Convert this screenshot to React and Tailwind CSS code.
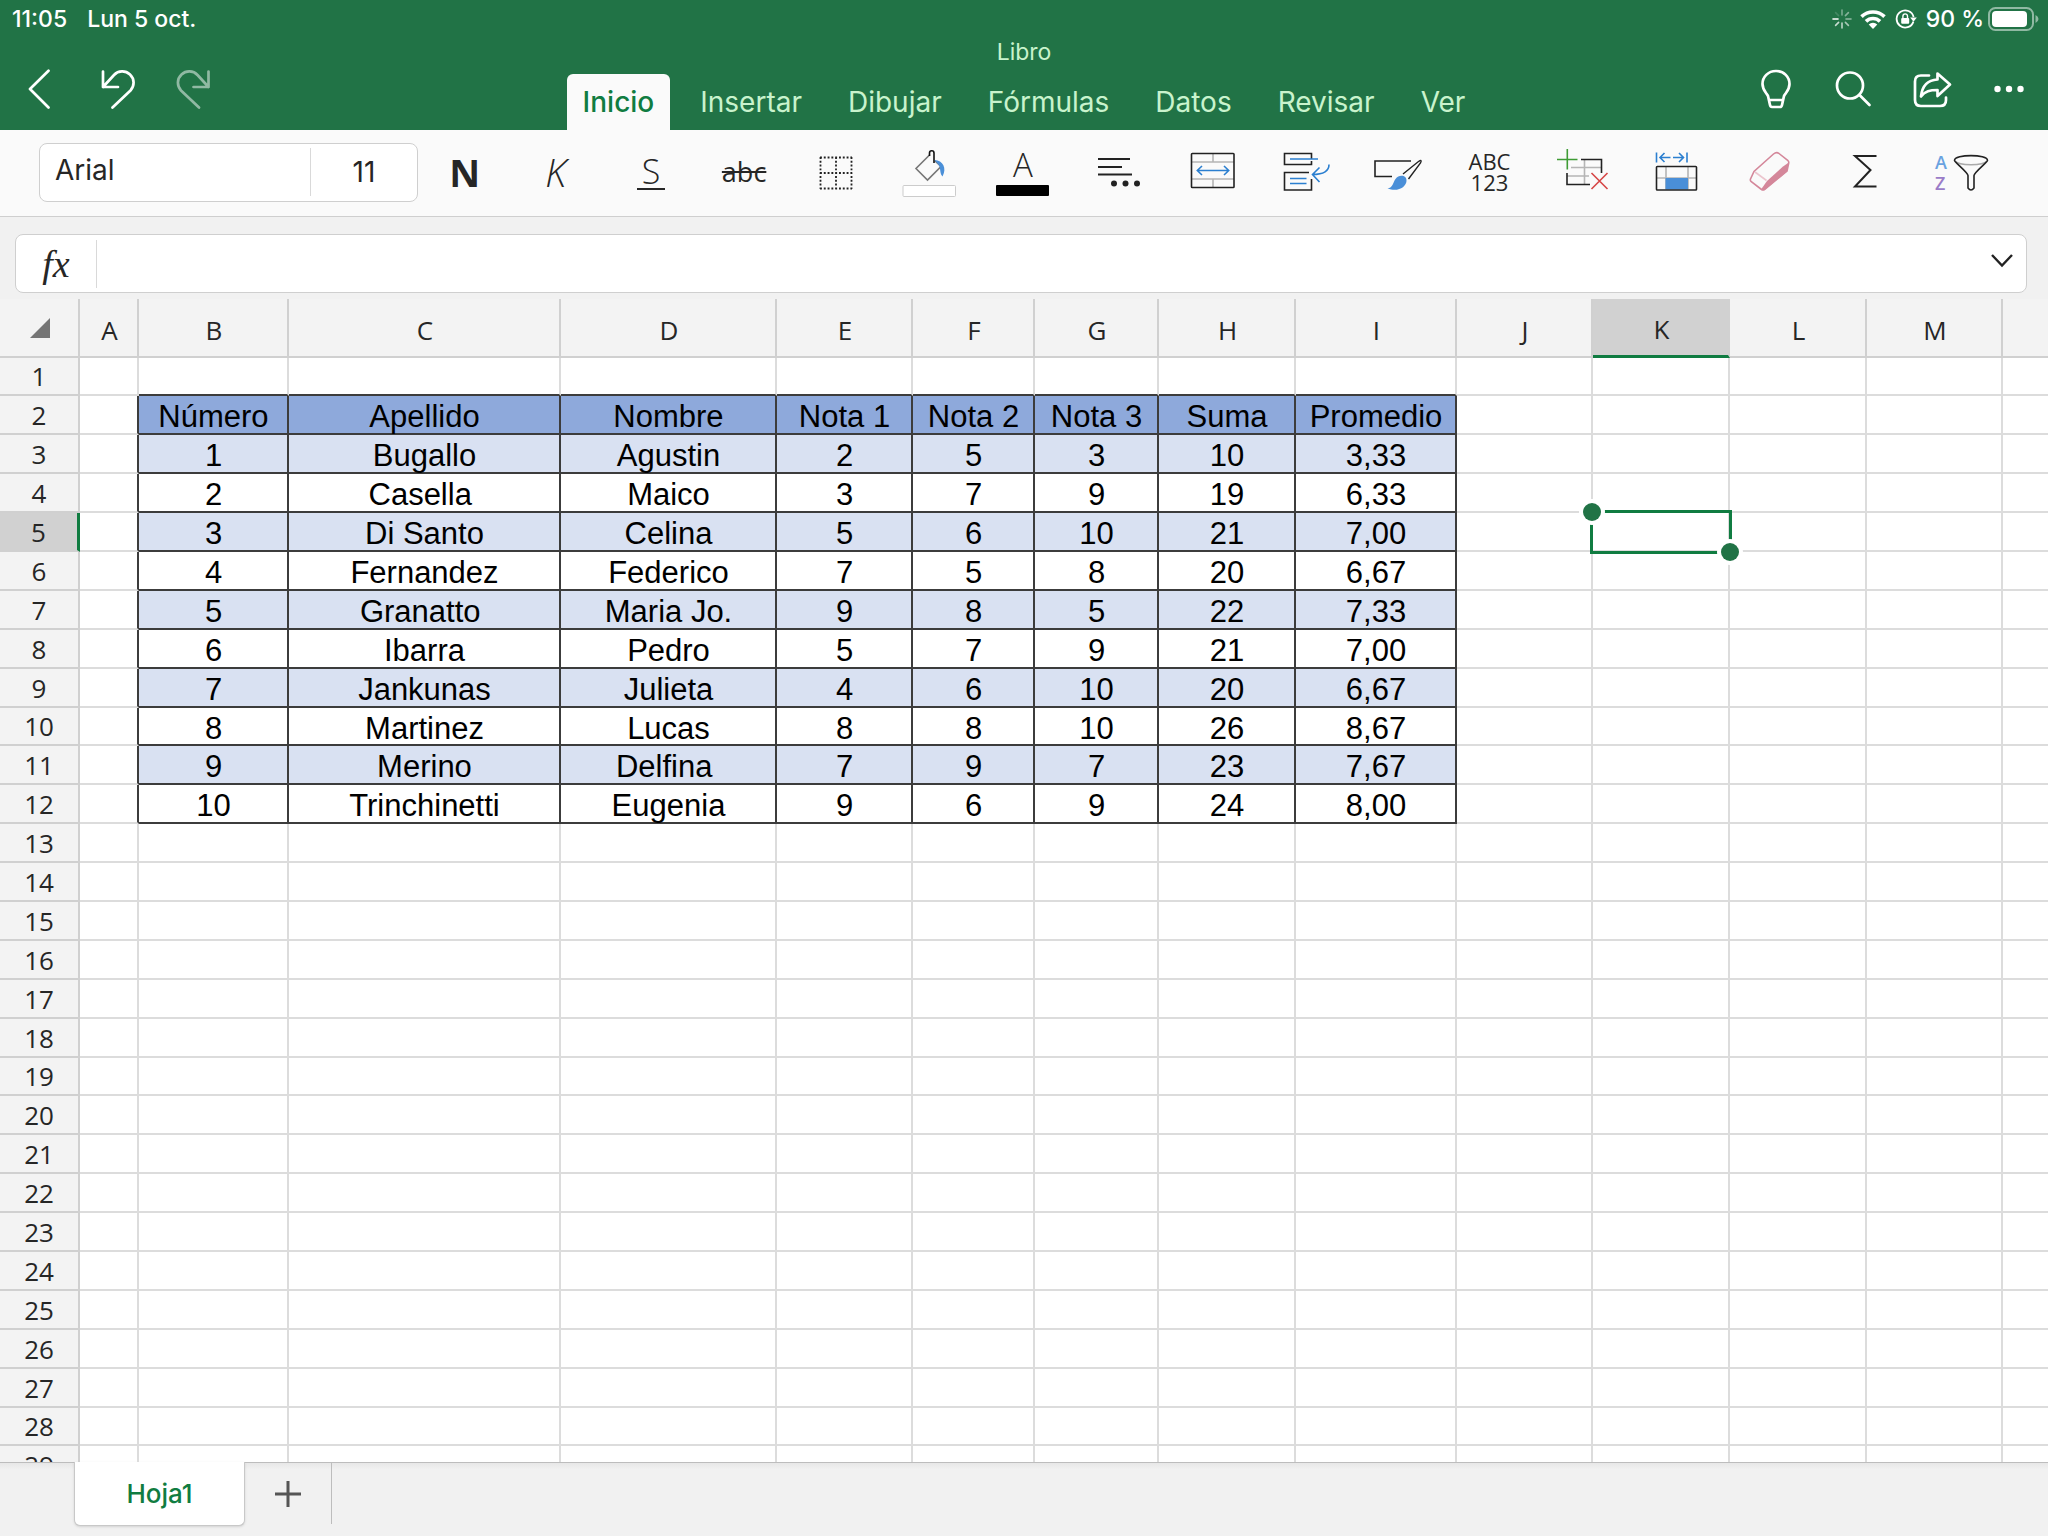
import { clsx } from 'clsx'

const tabs = ['Inicio', 'Insertar', 'Dibujar', 'Fórmulas', 'Datos', 'Revisar', 'Ver']

const columns = [
  { id: 'A', width: 'w-[59px]' },
  { id: 'B', width: 'w-[150px]' },
  { id: 'C', width: 'w-[272px]' },
  { id: 'D', width: 'w-[216px]' },
  { id: 'E', width: 'w-[136px]' },
  { id: 'F', width: 'w-[122px]' },
  { id: 'G', width: 'w-[124px]' },
  { id: 'H', width: 'w-[137px]' },
  { id: 'I', width: 'w-[161px]' },
  { id: 'J', width: 'w-[136px]' },
  { id: 'K', width: 'w-[137px]' },
  { id: 'L', width: 'w-[137px]' },
  { id: 'M', width: 'w-[136px]' },
  { id: '', width: '' },
]

// sheet data, starts at B2 (some names were typed with a trailing space)
const data = [
  ['Número', 'Apellido', 'Nombre', 'Nota 1', 'Nota 2', 'Nota 3', 'Suma', 'Promedio'],
  ['1', 'Bugallo', 'Agustin', '2', '5', '3', '10', '3,33'],
  ['2', 'Casella ', 'Maico', '3', '7', '9', '19', '6,33'],
  ['3', 'Di Santo', 'Celina', '5', '6', '10', '21', '7,00'],
  ['4', 'Fernandez', 'Federico', '7', '5', '8', '20', '6,67'],
  ['5', 'Granatto ', 'Maria Jo.', '9', '8', '5', '22', '7,33'],
  ['6', 'Ibarra', 'Pedro', '5', '7', '9', '21', '7,00'],
  ['7', 'Jankunas', 'Julieta', '4', '6', '10', '20', '6,67'],
  ['8', 'Martinez', 'Lucas', '8', '8', '10', '26', '8,67'],
  ['9', 'Merino', 'Delfina ', '7', '9', '7', '23', '7,67'],
  ['10', 'Trinchinetti', 'Eugenia', '9', '6', '9', '24', '8,00'],
]

const rows = Array.from({ length: 29 }, (_, i) => i + 1)
const selected = { col: 'K', row: 5 }

function Nav({ label, children, className }) {
  return (
    <button aria-label={label} className={clsx('size-10 text-white', className)}>
      <svg viewBox="0 0 40 40" className="size-10" fill="none" stroke="currentColor" strokeWidth="2.7" strokeLinecap="round" strokeLinejoin="round">
        {children}
      </svg>
    </button>
  )
}

function StatusBar() {
  return (
    <div className="h-[38px] shrink-0 pl-3 pr-2 flex items-center justify-between text-[23px] leading-7 font-medium text-white">
      <div className="flex gap-5">
        <span>11:05</span>
        <span>Lun 5 oct.</span>
      </div>
      <div className="flex items-center">
        <svg viewBox="0 0 20 20" className="size-5" stroke="#fff" strokeWidth="1.6" strokeLinecap="round">
          <path d="M1 10h5" />
          <path d="M3.6 16.4l3-3" opacity=".75" />
          <path d="M10 19v-5" opacity=".7" />
          <path d="M16.4 16.4l-3-3" opacity=".6" />
          <path d="M19 10h-5" opacity=".5" />
          <path d="M16.4 3.6l-3 3" opacity=".45" />
          <path d="M10 1v5" opacity=".4" />
          <path d="M3.6 3.6l3 3" opacity=".15" />
        </svg>
        <svg viewBox="0 0 28 20" className="ml-[7px] w-7 h-5" fill="none" stroke="#fff" strokeWidth="3.6">
          <path d="M2.5 7.6a16.6 16.6 0 0 1 23 0" />
          <path d="M7 12.4a10 10 0 0 1 14 0" />
          <path d="M14 20l-4.3-4.4a6.2 6.2 0 0 1 8.6 0z" fill="#fff" stroke="none" />
        </svg>
        <svg viewBox="0 0 22 20" className="ml-2 w-[22px] h-5" fill="none" stroke="#fff" strokeWidth="1.8">
          <path d="M18.4 12.6A8.6 8.6 0 1 1 18.6 8" />
          <path d="M15.2 8.4h6.6l-3.3 4.4z" fill="#fff" stroke="none" />
          <rect x="6.2" y="9" width="8" height="5.8" rx="1" fill="#fff" stroke="none" />
          <path d="M7.9 9.4V7.2a2.3 2.3 0 0 1 4.6 0v2.2" strokeWidth="1.4" />
        </svg>
        <span className="ml-[9px] whitespace-nowrap">90 %</span>
        <svg viewBox="0 0 52 24" className="ml-1 w-[52px] h-6">
          <rect x="1" y="1" width="44" height="22" rx="6.5" fill="none" stroke="#fff" strokeOpacity=".5" strokeWidth="2" />
          <rect x="4" y="4" width="35" height="16" rx="4" fill="#fff" />
          <path d="M47.5 8q3 1.5 3 4t-3 4z" fill="#fff" opacity=".5" />
        </svg>
      </div>
    </div>
  )
}

function Header() {
  return (
    <header className="bg-[#217346] h-[130px] shrink-0 flex flex-col">
      <StatusBar />
      <div className="flex-1 grid grid-cols-[1fr_auto_1fr]">
        <div className="flex items-center gap-9 pl-[22px] pt-[10px]">
          <Nav label="Atrás">
            <path d="M26.5 1.8L8 20l18.5 18.5" />
          </Nav>
          <Nav label="Deshacer">
            <path d="M5 2.5v15.5h15M5 18L16 6a11.3 11.3 0 0 1 16.5 15.5L14.5 38.5" />
          </Nav>
          <Nav label="Rehacer" className="opacity-50">
            <path d="M34.5 2.5v15.5h-15M34.5 18L23.5 6A11.3 11.3 0 0 0 7 21.5L25 38.5" />
          </Nav>
        </div>
        <div className="flex flex-col justify-between">
          <h1 className="text-center text-[23px] leading-7 text-[#c9f3cd]">Libro</h1>
          <nav className="flex gap-[14px]">
            {tabs.map((tab, i) => (
              <button
                key={tab}
                className={clsx(
                  'h-14 px-4 rounded-t-md text-[28px] leading-8',
                  i === 0 ? 'bg-[#fafafa] text-[#107c41] font-medium' : 'text-[#c9f3cd]'
                )}
              >
                {tab}
              </button>
            ))}
          </nav>
        </div>
        <div className="flex items-center justify-end gap-[37px] pr-[19px] pt-[10px]">
          <Nav label="Ayuda">
            <path d="M18 2C10 2 4.5 8 4.5 15c0 6 3.5 8.500 5.500 12l2 9q.4 2 2 2h8q1.600 0 2-2l2-9c2-3.500 5.500-6 5.500-12C31.500 8 26 2 18 2zM11.500 31h13" />
          </Nav>
          <Nav label="Buscar">
            <circle cx="15" cy="16.500" r="13" />
            <path d="M24.500 26l10 10" />
          </Nav>
          <Nav label="Compartir">
            <path d="M17 6.500H9q-6 0-6 6V31q0 6 6 6h19q6 0 6-6v-2.500" />
            <path d="M25.500 4.500L38 15.500 25.500 27v-6C18 21 13 22 9 27.500 10 18 15 11 25.500 10.500z" />
          </Nav>
          <Nav label="Más">
            <g fill="currentColor" stroke="none">
              <circle cx="8.500" cy="20" r="3.200" />
              <circle cx="20" cy="20" r="3.200" />
              <circle cx="31.500" cy="20" r="3.200" />
            </g>
          </Nav>
        </div>
      </div>
    </header>
  )
}

function Tool({ label, children }) {
  return (
    <button aria-label={label} className="flex-1 h-14 flex items-center justify-center text-[#262626] font-['Open_Sans',sans-serif]">
      {children}
    </button>
  )
}

function Icon({ children }) {
  return (
    <svg viewBox="0 0 80 56" className="w-20 h-14 shrink-0 overflow-visible" fill="none" stroke="#222" strokeWidth="1.600">
      {children}
    </svg>
  )
}

function Toolbar() {
  return (
    <div className="h-[87px] shrink-0 bg-[#fafafa] border-b border-[#cfcfcf] pl-[39px] pr-[46px] pb-[2px] flex items-center">
      <div className="w-[379px] h-[59px] shrink-0 flex items-center bg-white border border-[#cfcfcf] rounded-lg text-[28px] leading-8 text-[#262626]">
        <input aria-label="Fuente" defaultValue="Arial" className="w-[270px] pl-[15px] pb-1 outline-none" />
        <input aria-label="Tamaño de fuente" defaultValue="11" className="min-w-0 flex-1 h-12 border-l border-[#d9d9d9] text-center outline-none" />
      </div>
      <Tool label="Negrita">
        <span className="text-[38px] leading-10 font-bold">N</span>
      </Tool>
      <Tool label="Cursiva">
        <span className="pr-1 text-[38px] leading-10 italic font-light">K</span>
      </Tool>
      <Tool label="Subrayado">
        <span className="text-[34px] leading-[34px] font-light px-[5px] border-b-2 border-[#262626]">S</span>
      </Tool>
      <Tool label="Tachado">
        <span className="text-[27px] leading-10 line-through decoration-2">abc</span>
      </Tool>
      <Tool label="Bordes">
        <Icon>
          <path d="M23 13.500h32M23 29h32M23 44.500h32M23.500 13v32M39 13v32M54.500 13v32" strokeWidth="1.800" strokeDasharray="1.900 1.900" />
        </Icon>
      </Tool>
      <Tool label="Color de relleno">
        <Icon>
          <path d="M40 10.500L26 24.500 37.500 36 51 22.500l-6.500-6" stroke="#777" />
          <path d="M39.500 12V9a2.200 2.200 0 0 1 4.500 0v10" stroke="#111" />
          <path d="M44.500 16C53 16.500 57 24 52.500 32.500 49 29 51.500 23 47.500 19.500z" fill="#4a8fd8" stroke="none" />
          <rect x="13" y="41.500" width="52.500" height="11" rx="1" fill="#fff" stroke="#ccc" strokeWidth="1" />
        </Icon>
      </Tool>
      <Tool label="Color de fuente">
        <Icon>
          <text x="39" y="33" textAnchor="middle" fill="#262626" stroke="none" className="text-[33px] font-light">A</text>
          <rect x="12" y="41" width="53" height="11" rx="1" fill="#000" stroke="none" />
        </Icon>
      </Tool>
      <Tool label="Alineación">
        <Icon>
          <path d="M21 15h32M21 23h24M21 30.500h34" strokeWidth="1.800" />
          <g fill="#222" stroke="none">
            <circle cx="37" cy="39.500" r="3" />
            <circle cx="48.500" cy="39.500" r="3" />
            <circle cx="60" cy="39.500" r="3" />
          </g>
        </Icon>
      </Tool>
      <Tool label="Combinar">
        <Icon>
          <path d="M22 18h42M22 35h42M43 10v8M43 35v8" stroke="#b5b5b5" />
          <rect x="21.500" y="9.500" width="42.500" height="34" rx=".8" />
          <path d="M27.500 26.500h31M32 22l-4.700 4.500L32 31M54 22l4.700 4.500L54 31" stroke="#2b7fd0" />
        </Icon>
      </Tool>
      <Tool label="Ajustar texto">
        <Icon>
          <path d="M48.500 15V9.500h-27v11h27V17M46 28.500H21.500V46h27V35" />
          <path d="M27 15h28M27 34.500h16.500M27 39.500h16.500" stroke="#2b7fd0" />
          <path d="M66 20.500C66 27 61 30.500 49.500 30.500M56.500 23.500l-7 7 7 7.500" stroke="#2b7fd0" />
        </Icon>
      </Tool>
      <Tool label="Estilos de celda">
        <Icon>
          <path d="M55 17H19v15.500h17" />
          <path d="M47 30L62.500 17.500q4-2.500 2 1.500L52.500 35" strokeWidth="1.400" />
          <path d="M31.500 44.500C37 44 37 38 39.500 35 43 30 51 31 50.500 37 50 43 42 48.500 31.500 44.500z" fill="#4a8fd8" stroke="none" />
        </Icon>
      </Tool>
      <Tool label="Formato de número">
        <span className="text-[22px] leading-[21px] font-medium">
          ABC
          <br />
          123
        </span>
      </Tool>
      <Tool label="Insertar y eliminar celdas">
        <Icon>
          <path d="M28 23.500h30M24 32h22M41.500 16v24" stroke="#b5b5b5" />
          <path d="M38 15.500h20.500V29M24 29v11.500h23" />
          <path d="M14 15.500h20.500M24.300 5v20.500" stroke="#3f9c35" />
          <path d="M48.500 29l16 16M64.500 29l-16 16" stroke="#d64545" />
        </Icon>
      </Tool>
      <Tool label="Ancho de columna">
        <Icon>
          <path d="M30 23v22M52 23v22M21 34h39" stroke="#b5b5b5" />
          <rect x="29.500" y="34" width="22.500" height="11.500" fill="#4a8fd8" stroke="none" />
          <rect x="20.500" y="22.500" width="40" height="23.500" rx=".8" />
          <path d="M20.500 8.500v10M51 8.500v10M24.500 13.500h10M28.500 9l-4.500 4.500 4.500 4.500M37 13.500h10M43 9l4.500 4.500-4.500 4.500" stroke="#2b7fd0" />
        </Icon>
      </Tool>
      <Tool label="Borrar">
        <Icon>
          <path d="M59.800 18.500L58 27.500 35.500 46l-3.500-.5L38 37 54 22.500z" fill="#d4879a" stroke="none" />
          <path d="M50 9.500l9 7.200q1 1 .7 2.500L58 27 35.500 45.500q-1.500 1-3 0L22 37.500q-1-1-.5-2.500L25 27.500 44.500 10q3-2.500 5.500-.5z" stroke="#d4879a" />
          <path d="M26 28l11.500 8.500" stroke="#ecc5ce" />
        </Icon>
      </Tool>
      <Tool label="Autosuma">
        <Icon>
          <path d="M54.500 12H33l15.500 14L33 42.500h21.500" strokeWidth="2" />
        </Icon>
      </Tool>
      <Tool label="Ordenar y filtrar">
        <Icon>
          <text x="20" y="25" fill="#6aa2e0" stroke="none" className="text-[18px] font-semibold">A</text>
          <text x="20" y="46" fill="#9a7cc8" stroke="none" className="text-[18px] font-semibold">Z</text>
          <path d="M40 17c4 5 28 5 32 0" stroke="#aaa" />
          <path d="M39.500 16.500c0-6.500 33-6.500 33 0 0 1.500-13.500 12-13.500 15V44q-3 4-6 0V31.500c0-3-13.500-13.500-13.500-15z" />
        </Icon>
      </Tool>
    </div>
  )
}

function FormulaBar() {
  return (
    <div className="shrink-0 bg-[#f1f1f1] pt-[17px] pb-[6px] pl-[15px] pr-[21px]">
      <div className="h-[59px] flex items-center bg-white border border-[#cfcfcf] rounded-lg">
        <label htmlFor="formula" className="w-20 text-center font-['Liberation_Serif',serif] italic text-[38px] leading-[46px] text-[#262626]">fx</label>
        <input id="formula" className="min-w-0 flex-1 h-12 border-l border-[#d9d9d9] px-3 text-[28px] outline-none" />
        <button aria-label="Expandir" className="size-12 pb-1 flex items-center justify-center">
          <svg viewBox="0 0 24 24" className="size-6" fill="none" stroke="#222" strokeWidth="2.400">
            <path d="M2 5l10 10.500L22 5" />
          </svg>
        </button>
      </div>
    </div>
  )
}

// border colours live on the right and bottom side of each cell
function cellClass(row, c) {
  const inData = row >= 2 && row <= 12 && c >= 1 && c <= 8
  const darkRight = row >= 2 && row <= 12 && c >= 0 && c <= 8
  const darkBottom = row >= 1 && row <= 12 && c >= 1 && c <= 8
  return clsx(
    'relative p-0 border-b-2 text-center align-top',
    c < columns.length - 1 && 'border-r-2',
    darkRight ? 'border-r-[#3c3c3c]' : 'border-r-[#dcdcdc]',
    darkBottom ? 'border-b-[#3c3c3c]' : 'border-b-[#dcdcdc]',
    inData && row === 2 && 'bg-[#8ea9db]',
    inData && row > 2 && row % 2 === 1 && 'bg-[#d9e1f2]'
  )
}

function Selection() {
  return (
    <div className="absolute z-10 -top-[3px] -left-[3px] -right-[4px] -bottom-[4px] border-3 border-[#107c41]">
      <span className="absolute -top-[10px] -left-[10px] size-[18px] rounded-full bg-[#217346] ring-4 ring-white" />
      <span className="absolute -bottom-[10px] -right-[10px] size-[18px] rounded-full bg-[#217346] ring-4 ring-white" />
    </div>
  )
}

function Sheet() {
  return (
    <main className="flex-1 min-h-0 overflow-hidden bg-white">
      <table className="w-full table-fixed border-separate border-spacing-0">
        <thead className="font-['Open_Sans',sans-serif] text-[26px] leading-8 text-[#262626]">
          <tr className="h-[59px]">
            <th aria-label="Seleccionar todo" className="w-[80px] p-0 bg-[#f3f3f3] border-r-2 border-b-2 border-[#d0d0d0]">
              <svg viewBox="0 0 20 20" className="ml-[30px] size-5" fill="#757575">
                <path d="M20 0v20H0z" />
              </svg>
            </th>
            {columns.map((col) => (
              <th
                key={col.id}
                scope="col"
                className={clsx(
                  'p-0 pt-1 pl-[2px] font-normal',
                  col.width,
                  col.id === selected.col
                    ? 'bg-[#d1d1d1] border-b-3 border-b-[#107c41] border-r-2 border-r-[#d1d1d1]'
                    : 'bg-[#f3f3f3] border-b-2 border-[#d0d0d0]',
                  col.id && 'border-r-2'
                )}
              >
                {col.id}
              </th>
            ))}
          </tr>
        </thead>
        <tbody className="font-['Liberation_Sans',Arial,sans-serif] text-[31px] leading-[33px] text-black">
          {rows.map((row) => (
            <tr key={row} className={row % 9 === 1 ? 'h-[38px]' : 'h-[39px]'}>
              <th
                scope="row"
                className={clsx(
                  "p-0 border-b-2 border-b-[#d0d0d0] font-['Open_Sans',sans-serif] text-[26px] leading-8 font-normal text-[#262626]",
                  row === selected.row ? 'bg-[#d1d1d1] border-r-3 border-r-[#107c41]' : 'bg-[#f3f3f3] border-r-2 border-r-[#d0d0d0]'
                )}
              >
                {row}
              </th>
              {columns.map((col, c) => {
                const value = data[row - 2]?.[c - 1]
                return (
                  <td key={col.id} className={cellClass(row, c)}>
                    {value && <div className="h-9 pt-1 pl-px whitespace-pre">{value}</div>}
                    {row === selected.row && col.id === selected.col && <Selection />}
                  </td>
                )
              })}
            </tr>
          ))}
        </tbody>
      </table>
    </main>
  )
}

function SheetTabs() {
  return (
    <footer className="h-[74px] shrink-0 bg-[#f1f1f1] bg-linear-to-b from-[#e6e6e6] to-[#f1f1f1] to-10% flex items-start">
      <div className="w-[74px] border-t border-[#bdbdbd]" />
      <button className="w-[171px] h-[64px] bg-white border border-t-0 border-[#c8c8c8] rounded-b-md shadow-sm text-[26px] leading-8 font-medium text-[#107c41]">
        Hoja1
      </button>
      <button aria-label="Nueva hoja" className="w-[87px] h-[62px] border-r border-t border-[#bdbdbd] flex items-center justify-center">
        <svg viewBox="0 0 26 26" className="size-[26px]" stroke="#555" strokeWidth="3">
          <path d="M13 0v26M0 13h26" />
        </svg>
      </button>
      <div className="flex-1 border-t border-[#bdbdbd]" />
    </footer>
  )
}

export default function App() {
  return (
    <div className="h-screen flex flex-col overflow-hidden font-['Inter',sans-serif]">
      <Header />
      <Toolbar />
      <FormulaBar />
      <Sheet />
      <SheetTabs />
    </div>
  )
}
